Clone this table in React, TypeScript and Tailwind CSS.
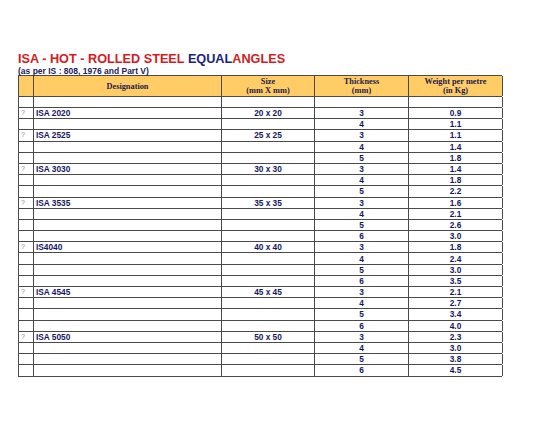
import React from "react";

type Group = { name: string; size: string; rows: [string, string][] };

const groups: Group[] = [
  { name: "ISA 2020", size: "20 x 20", rows: [["3", "0.9"], ["4", "1.1"]] },
  { name: "ISA 2525", size: "25 x 25", rows: [["3", "1.1"], ["4", "1.4"], ["5", "1.8"]] },
  { name: "ISA 3030", size: "30 x 30", rows: [["3", "1.4"], ["4", "1.8"], ["5", "2.2"]] },
  { name: "ISA 3535", size: "35 x 35", rows: [["3", "1.6"], ["4", "2.1"], ["5", "2.6"], ["6", "3.0"]] },
  { name: "IS4040", size: "40 x 40", rows: [["3", "1.8"], ["4", "2.4"], ["5", "3.0"], ["6", "3.5"]] },
  { name: "ISA 4545", size: "45 x 45", rows: [["3", "2.1"], ["4", "2.7"], ["5", "3.4"], ["6", "4.0"]] },
  { name: "ISA 5050", size: "50 x 50", rows: [["3", "2.3"], ["4", "3.0"], ["5", "3.8"], ["6", "4.5"]] },
];

const cols = "grid grid-cols-[15px_188px_93px_94px_94px]";
const cell = "border-r border-[#4a4a4a] flex items-center";

export default function App() {
  const flat: { q: boolean; name: string; size: string; t: string; w: string }[] = [];
  groups.forEach((g) =>
    g.rows.forEach((r, i) =>
      flat.push({ q: i === 0, name: i === 0 ? g.name : "", size: i === 0 ? g.size : "", t: r[0], w: r[1] })
    )
  );
  return (
    <div className="w-[560px] h-[433px] bg-white" style={{ fontFamily: '"Liberation Sans", Arial, sans-serif' }}>
      <div className="pl-[18px] pt-[53px]">
        <div className="h-[14px] leading-[13px] text-[12.7px] font-bold text-[#d51c22] whitespace-nowrap">
          ISA - HOT - ROLLED STEEL <span className="text-[#1b237a]">EQUAL</span>ANGLES
        </div>
        <div className="h-[8px] leading-[8px] text-[8.5px] font-bold text-[#1c1c5e] whitespace-nowrap">
          (as per IS : 808, 1976 and Part V)
        </div>
        <div className="w-[484px] border-l border-t border-[#4a4a4a]">
          <div
            className={`${cols} h-[21px] bg-[#ffcc66] border-b border-[#4a4a4a] text-[#1c1c50] font-bold text-[8.3px] leading-[9px]`}
            style={{ fontFamily: '"Liberation Serif", "Times New Roman", serif' }}
          >
            <div className={cell}></div>
            <div className={`${cell} justify-center`}>Designation</div>
            <div className={`${cell} justify-center text-center`}>
              Size<br />(mm X mm)
            </div>
            <div className={`${cell} justify-center text-center`}>
              Thickness<br />(mm)
            </div>
            <div className={`${cell} justify-center text-center`}>
              Weight per metre<br />(in Kg)
            </div>
          </div>
          <div className={`${cols} h-[11px] border-b border-[#4a4a4a]`}>
            <div className={cell}></div>
            <div className={cell}></div>
            <div className={cell}></div>
            <div className={cell}></div>
            <div className={cell}></div>
          </div>
          {flat.map((r, i) => (
            <div
              key={i}
              className={`${cols} h-[11.2px] border-b border-[#4a4a4a] text-[8.3px] leading-[8px] font-bold text-[#161664]`}
            >
              <div className={`${cell} pl-[2px] text-[7px] font-normal text-[#888]`}>{r.q ? "?" : ""}</div>
              <div className={`${cell} pl-[2px]`}>{r.name}</div>
              <div className={`${cell} justify-center`}>{r.size}</div>
              <div className={`${cell} justify-center`}>{r.t}</div>
              <div className={`${cell} justify-center`}>{r.w}</div>
            </div>
          ))}
        </div>
      </div>
    </div>
  );
}
